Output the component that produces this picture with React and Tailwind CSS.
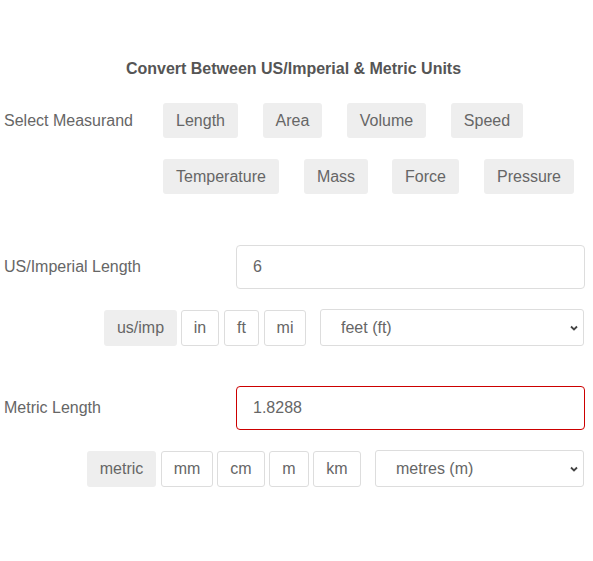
import { useState } from 'react'

const measurands1 = [
  ['Length', 'w-[75px]'],
  ['Area', 'w-[59px]'],
  ['Volume', 'w-[79px]'],
  ['Speed', 'w-[72px]'],
]
const measurands2 = [
  ['Temperature', 'w-[116px]', ''],
  ['Mass', 'w-[64px]', ''],
  ['Force', 'w-[67px]', '-ml-[1px]'],
  ['Pressure', 'w-[90px]', ''],
]

function Chevron() {
  return (
    <svg
      className="pointer-events-none absolute right-[5px] top-1/2 -translate-y-1/2"
      width="10"
      height="10"
      viewBox="0 0 10 10"
    >
      <path d="M2 3.5 L5 6.5 L8 3.5" fill="none" stroke="#444" strokeWidth="1.8" />
    </svg>
  )
}

function UnitRow({ system, units, selected, options, selectWidth, gap, firstGap }) {
  return (
    <div className="flex items-center justify-end">
      <div className={`flex items-center ${gap}`}>
        <span className={`h-[36px] flex items-center justify-center bg-[#eeeeee] rounded-[3px] ${firstGap} ${system[1]}`}>
          {system[0]}
        </span>
        {units.map(([u, w]) => (
          <button
            key={u}
            className={`h-[36px] bg-white border border-[#dddddd] rounded-[3px] text-[#666] ${w}`}
          >
            {u}
          </button>
        ))}
      </div>
      <div className="relative ml-[14px] mr-[1px]" style={{ width: selectWidth }}>
        <select
          defaultValue={selected}
          className="w-full h-[37px] appearance-none bg-white border border-[#dddddd] rounded-[3px] pl-[20px] text-[#666] outline-none"
        >
          {options.map((o) => (
            <option key={o}>{o}</option>
          ))}
        </select>
        <Chevron />
      </div>
    </div>
  )
}

export default function App() {
  const [imperial, setImperial] = useState('6')
  const metric = String(Math.round((parseFloat(imperial) || 0) * 0.3048 * 1e6) / 1e6)

  return (
    <div
      className="w-[593px] h-[561px] bg-white text-[16px] text-[#666] pr-[8px]"
      style={{ fontFamily: '"Liberation Sans", Arial, sans-serif' }}
    >
      <h2 className="pt-[60px] text-center font-bold text-[#555] leading-[18px] pl-[2px]">
        Convert Between US/Imperial &amp; Metric Units
      </h2>

      <div className="flex mt-[25px]">
        <div className="w-[163px] pl-[4px] h-[35px] flex items-center">Select Measurand</div>
        <div className="flex flex-col gap-[21px]">
          <div className="flex gap-[25px]">
            {measurands1.map(([m, w]) => (
              <button key={m} className={`h-[35px] bg-[#eeeeee] rounded-[3px] text-[#666] ${w}`}>
                {m}
              </button>
            ))}
          </div>
          <div className="flex gap-[25px]">
            {measurands2.map(([m, w, extra]) => (
              <button key={m} className={`h-[35px] bg-[#eeeeee] rounded-[3px] text-[#666] ${w} ${extra}`}>
                {m}
              </button>
            ))}
          </div>
        </div>
      </div>

      <div className="flex items-center mt-[51px]">
        <label className="w-[236px] pl-[4px]">US/Imperial Length</label>
        <input
          value={imperial}
          onChange={(e) => setImperial(e.target.value)}
          className="flex-1 h-[44px] border border-[#dddddd] rounded-[4px] px-[16px] text-[#666] outline-none"
        />
      </div>
      <div className="mt-[20px]">
        <UnitRow
          system={['us/imp', 'w-[73px]']}
          units={[
            ['in', 'w-[38px]'],
            ['ft', 'w-[35px]'],
            ['mi', 'w-[42px]'],
          ]}
          gap="gap-[5px]"
          firstGap="-mr-[1px]"
          selected="feet (ft)"
          options={['inches (in)', 'feet (ft)', 'yards (yd)', 'miles (mi)']}
          selectWidth={264}
        />
      </div>

      <div className="flex items-center mt-[40px]">
        <label className="w-[236px] pl-[4px]">Metric Length</label>
        <input
          value={metric}
          readOnly
          className="flex-1 h-[44px] border border-[#cc0000] rounded-[4px] px-[16px] text-[#666] outline-none"
        />
      </div>
      <div className="mt-[20px]">
        <UnitRow
          system={['metric', 'w-[69px]']}
          units={[
            ['mm', 'w-[52px]'],
            ['cm', 'w-[48px]'],
            ['m', 'w-[40px]'],
            ['km', 'w-[48px]'],
          ]}
          gap="gap-[4px]"
          firstGap="mr-[1px]"
          selected="metres (m)"
          options={['millimetres (mm)', 'centimetres (cm)', 'metres (m)', 'kilometres (km)']}
          selectWidth={209}
        />
      </div>
    </div>
  )
}
